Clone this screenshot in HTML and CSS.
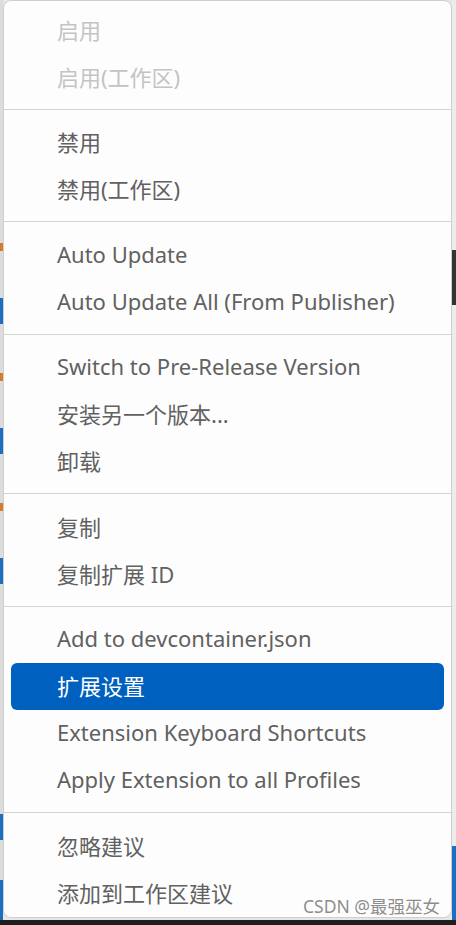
FILE: index.html
```html
<!DOCTYPE html>
<html lang="zh-CN">
<head>
<meta charset="utf-8">
<title>Context menu</title>
<link rel="stylesheet" href="styles.css">
</head>
<body>
<div class="screen">
  <div class="gutter gutter-left">
    <span class="bit bit-orange b1"></span>
    <span class="bit bit-blue b2"></span>
    <span class="bit bit-orange b3"></span>
    <span class="bit bit-blue b4"></span>
    <span class="bit bit-orange b5"></span>
    <span class="bit bit-blue b6"></span>
    <span class="bit bit-blue b7"></span>
    <span class="bit bit-blue b8"></span>
  </div>
  <div class="menu">
    <div class="item disabled">启用</div>
    <div class="item disabled">启用(工作区)</div>
    <div class="sep"></div>
    <div class="item">禁用</div>
    <div class="item">禁用(工作区)</div>
    <div class="sep"></div>
    <div class="item">Auto Update</div>
    <div class="item">Auto Update All (From Publisher)</div>
    <div class="sep"></div>
    <div class="item">Switch to Pre-Release Version</div>
    <div class="item">安装另一个版本...</div>
    <div class="item">卸载</div>
    <div class="sep"></div>
    <div class="item">复制</div>
    <div class="item">复制扩展 ID</div>
    <div class="sep"></div>
    <div class="item">Add to devcontainer.json</div>
    <div class="item active">扩展设置</div>
    <div class="item">Extension Keyboard Shortcuts</div>
    <div class="item">Apply Extension to all Profiles</div>
    <div class="sep"></div>
    <div class="item">忽略建议</div>
    <div class="item">添加到工作区建议</div>
    <div class="watermark">CSDN @最强巫女</div>
  </div>
  <div class="gutter gutter-right">
    <span class="bit bit-dark r1"></span>
    <span class="bit bit-blue r2"></span>
  </div>
</div>
<div class="taskbar"></div>
</body>
</html>
```
FILE: styles.css
```css
html, body {
  margin: 0;
  padding: 0;
}
body {
  width: 456px;
  height: 925px;
  overflow: hidden;
  background: #e6e6e6;
  font-family: "Noto Sans", "Noto Sans CJK SC", sans-serif;
}
.screen {
  display: flex;
  height: 920px;
}
.gutter {
  position: relative;
  background: #e4e4e4;
}
.gutter-left {
  width: 3px;
  background: #dcdcdc;
}
.gutter-right {
  flex: 1;
  background: #ececec;
}
.bit {
  position: absolute;
  left: 0;
  width: 100%;
}
.bit-orange { background: #d77a2a; height: 8px; }
.bit-blue { background: #1a6fc0; height: 26px; }
.bit-dark { background: #333; }
.b1 { top: 243px; }
.b2 { top: 298px; }
.b3 { top: 373px; }
.b4 { top: 428px; }
.b5 { top: 503px; }
.b6 { top: 558px; }
.b7 { top: 814px; }
.b8 { top: 880px; height: 40px; }
.r1 { top: 250px; height: 55px; }
.r2 { top: 846px; height: 74px; }

.menu {
  position: relative;
  width: 449px;
  height: 918px;
  box-sizing: border-box;
  padding: 5px 0 0;
  background: #fdfdfd;
  border: 1px solid #cfcfcf;
  border-radius: 8px;
  color: #616161;
  font-size: 22px;
}
.item {
  display: flex;
  align-items: center;
  height: 47px;
  box-sizing: border-box;
  margin: 0 7px;
  padding: 0 0 2px 46px;
  border-radius: 6px;
  white-space: nowrap;
}
.item.disabled {
  color: #c4c4c4;
}
.item.active {
  background: #0060c0;
  color: #ffffff;
}
.sep {
  height: 1px;
  margin: 8.5px 0 9px;
  background: #d4d4d4;
}
.watermark {
  position: absolute;
  right: 11px;
  bottom: -1px;
  font-size: 17.5px;
  color: rgba(120, 120, 120, 0.85);
}
.taskbar {
  height: 5px;
  background: #1e1e1e;
}
```
